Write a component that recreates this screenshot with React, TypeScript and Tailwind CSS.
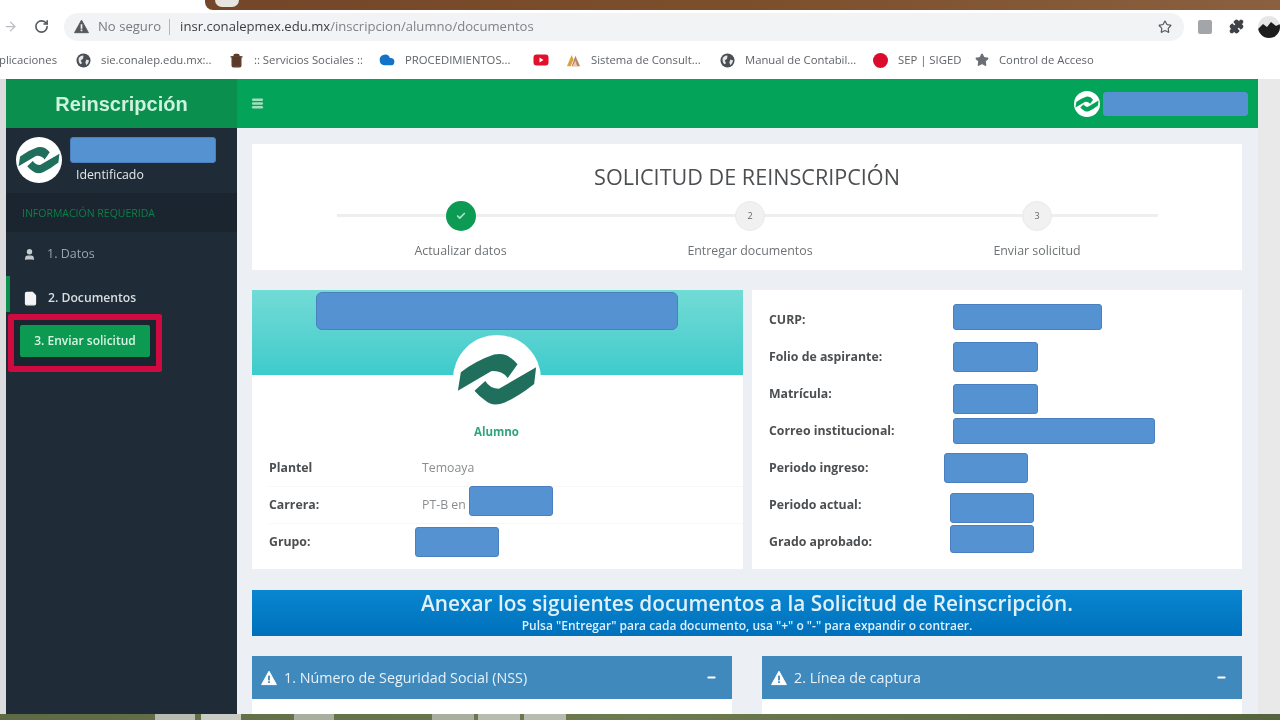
import React from "react";
import { ArrowRight, RotateCw, Star, Puzzle, Cloud, Trash2, User, FileText, Menu, Minus, Check } from "lucide-react";

function Logo({ size, fg = "#1f6f5c" }: { size: number; fg?: string }) {
  return (
    <svg width={size} height={size} viewBox="0 0 90 90" className="shrink-0">
      <circle cx="45" cy="45" r="45" fill="#ffffff" />
      <path d="M5 57 L8 38 Q24 26 42 20 Q56 17 66 30 L56 44 Q50 36 39 37 Z" fill={fg} />
      <path d="M85 33 L83 50 Q68 62 53 69 Q41 74 33 67 Q27 63 22 57 L33 47 Q38 55 47 55 Z" fill={fg} />
    </svg>
  );
}

function Warn({ size, fill, mark }: { size: number; fill: string; mark: string }) {
  return (
    <svg width={size} height={size} viewBox="0 0 16 16" className="shrink-0">
      <path d="M8 1.2 L15.4 14.6 H0.6 Z" fill={fill} stroke={fill} strokeWidth="1" strokeLinejoin="round" />
      <rect x="7.1" y="5.6" width="1.8" height="4.8" fill={mark} />
      <rect x="7.1" y="11.2" width="1.8" height="1.8" fill={mark} />
    </svg>
  );
}

function Earth() {
  return (
    <svg width="15" height="15" viewBox="0 0 16 16" className="shrink-0">
      <circle cx="8" cy="8" r="7.5" fill="#4a4f55" />
      <path d="M3 5 Q6 2 8 3 L7.5 6 L5 8 L6.5 11 L4.5 12 Q2 9 3 5 Z" fill="#e4e6e8" />
      <path d="M11 7 L14 8 Q13.5 11 11 13 L10 10 Z" fill="#e4e6e8" />
    </svg>
  );
}

function Tube() {
  return (
    <svg width="16" height="16" viewBox="0 0 16 16" className="shrink-0">
      <rect x="0.5" y="2.5" width="15" height="11" rx="3" fill="#e3102a" />
      <path d="M6.5 5.5 L10.5 8 L6.5 10.5 Z" fill="#ffffff" />
    </svg>
  );
}

function Sis() {
  return (
    <svg width="15" height="15" viewBox="0 0 16 16" className="shrink-0">
      <path d="M1 14 L6 2 L8 7 L5 14 Z" fill="#d9a23a" />
      <path d="M6 14 L10 3 L15 14 Z" fill="#b9846a" />
      <path d="M7 14 L10 8 L12 14 Z" fill="#e9c9a8" />
    </svg>
  );
}

function Redact({ className }: { className: string }) {
  return <div className={"rounded-[3px] bg-[#5592d2] border border-[#4a80bd] shrink-0 " + className} />;
}

const bookmarks: { w: string; icon: React.ReactNode; label: string }[] = [
  { w: "w-[153px]", icon: <Earth />, label: "sie.conalep.edu.mx:.." },
  { w: "w-[150px]", icon: <Trash2 size={15} className="text-[#5b3a2a] shrink-0" fill="#5b3a2a" />, label: ":: Servicios Sociales ::" },
  { w: "w-[154px]", icon: <Cloud size={16} className="text-[#1273c9] shrink-0" fill="#1273c9" />, label: "PROCEDIMIENTOS..." },
  { w: "w-[33px]", icon: <Tube />, label: "" },
  { w: "w-[154px]", icon: <Sis />, label: "Sistema de Consult..." },
  { w: "w-[153px]", icon: <Earth />, label: "Manual de Contabil..." },
  { w: "w-[102px]", icon: <span className="block size-[15px] rounded-full bg-[#dc0a2c] shrink-0" />, label: "SEP | SIGED" },
  { w: "w-[130px]", icon: <Star size={14} className="text-[#6a6f75] shrink-0" fill="#6a6f75" />, label: "Control de Acceso" },
];

const leftRows = [
  { label: "Plantel", value: "Temoaya", box: null },
  { label: "Carrera:", value: "PT-B en", box: "w-[84px] h-[30px] ml-[3px] -translate-y-[4px]" },
  { label: "Grupo:", value: "", box: "w-[84px] h-[30px] -ml-[7px] -translate-y-[1px]" },
];

const rightRows = [
  { label: "CURP:", box: "w-[149px] h-[26px] -translate-y-[3px]" },
  { label: "Folio de aspirante:", box: "w-[85px] h-[30px]" },
  { label: "Matrícula:", box: "w-[85px] h-[30px] translate-y-[5px]" },
  { label: "Correo institucional:", box: "w-[202px] h-[26px]" },
  { label: "Periodo ingreso:", box: "w-[84px] h-[30px] -ml-[9px]" },
  { label: "Periodo actual:", box: "w-[84px] h-[30px] -ml-[3px] translate-y-[3px]" },
  { label: "Grado aprobado:", box: "w-[84px] h-[28px] -ml-[3px] -translate-y-[3px]" },
];

const steps = [
  { label: "Actualizar datos", mark: <Check size={10} strokeWidth={4} className="text-[#a6e6c6]" />, active: true, w: "w-[291px]" },
  { label: "Entregar documentos", mark: "2", active: false, w: "w-[288px]" },
  { label: "Enviar solicitud", mark: "3", active: false, w: "w-[286px]" },
];

export default function App() {
  return (
    <div className="w-[1280px] h-[720px] overflow-hidden flex flex-col bg-white blur-[0.7px] font-['Open_Sans',sans-serif]">
      {/* window strip */}
      <div className="h-[10px] shrink-0 flex bg-white">
        <div className="w-[205px]" />
        <div className="flex-1 bg-gradient-to-r from-[#74462a] via-[#7c4f2c] to-[#8a6040] rounded-bl-[8px] pl-[10px]">
          <div className="w-[24px] h-[7px] rounded-b-full bg-[#e8e4e0]" />
        </div>
      </div>

      {/* toolbar */}
      <div className="h-[33px] shrink-0 flex items-center bg-white">
        <ArrowRight size={15} className="text-[#b9bcc0] ml-[3px] mr-[16px]" />
        <RotateCw size={15} strokeWidth={2.6} className="text-[#55595e] mr-[15px]" />
        <div className="w-[1120px] h-[28px] rounded-full bg-[#f1f3f4] flex items-center pl-[10px] pr-[12px] text-[13.1px]">
          <Warn size={15} fill="#55585c" mark="#f1f3f4" />
          <span className="text-[#777b80] ml-[9px]">No seguro</span>
          <span className="w-px h-[16px] bg-[#b4b7bb] ml-[8px] mr-[10px]" />
          <span className="text-[#3c4043]">insr.conalepmex.edu.mx</span>
          <span className="text-[#7f8388]">/inscripcion/alumno/documentos</span>
          <Star size={14} className="text-[#54585d] ml-auto" />
        </div>
        <span className="block size-[14px] rounded-[2px] bg-[#a3a6a9] ml-[14px] shrink-0" />
        <Puzzle size={15} className="text-[#3f4347] ml-[17px] shrink-0" fill="#3f4347" />
        <svg width="22" height="22" viewBox="0 0 22 22" className="ml-[14px] shrink-0">
          <clipPath id="av"><circle cx="11" cy="11" r="11" /></clipPath>
          <g clipPath="url(#av)">
            <rect width="22" height="22" fill="#e6e6e6" />
            <path d="M0 13 L5 8 L9 11 L13 6 L18 10 L22 8 V22 H0 Z" fill="#1d1d1d" />
          </g>
        </svg>
      </div>

      {/* bookmarks */}
      <div className="h-[36px] shrink-0 flex items-center pb-[2px] text-[11.3px] text-[#5f6368] overflow-hidden whitespace-nowrap">
        <span className="w-[77px] shrink-0 -ml-[1px] overflow-hidden">
          <span className="block">plicaciones</span>
        </span>
        {bookmarks.map((b, i) => (
          <div key={i} className={"flex items-center gap-[10px] shrink-0 " + b.w}>
            {b.icon}
            {b.label && <span>{b.label}</span>}
          </div>
        ))}
      </div>

      {/* page */}
      <div className="flex-1 min-h-0 flex bg-[#e6e6e6]">
        <div className="w-[6px] shrink-0 bg-[#dcdcdc]" />

        {/* sidebar */}
        <aside className="w-[231px] shrink-0 flex flex-col bg-[#1f2b36]">
          <div className="h-[49px] shrink-0 bg-[#0a8f4e] flex items-center justify-center pt-[1px] text-[#cdf2dd] text-[20px] font-bold font-['Liberation_Sans',sans-serif]">
            Reinscripción
          </div>
          <div className="h-[65px] shrink-0 flex pl-[10px] pt-[9px] gap-[8px]">
            <Logo size={46} />
            <div>
              <Redact className="w-[146px] h-[26px]" />
              <div className="text-[12.3px] text-[#e4e8ea] ml-[6px] mt-[3px]">Identificado</div>
            </div>
          </div>
          <div className="h-[39px] shrink-0 bg-[#1a252f] flex items-center pl-[16px] pt-[3px] text-[10.5px] text-[#0d7f48] whitespace-nowrap">
            INFORMACIÓN REQUERIDA
          </div>
          <div className="h-[44px] shrink-0 flex items-center pl-[17px] gap-[11px] text-[12.5px] text-[#9aa3ab]">
            <User size={13} fill="#c6ccd1" className="text-[#c6ccd1]" />
            <span>1. Datos</span>
          </div>
          <div className="h-[36px] shrink-0 flex items-center pl-[13px] pt-[8px] gap-[10px] text-[12.2px] font-semibold text-[#d9dee2] border-l-[4px] border-[#0a8f4e]">
            <FileText size={15} fill="#f2f4f5" className="text-[#f2f4f5]" />
            <span>2. Documentos</span>
          </div>
          <div className="w-[154px] h-[58px] ml-[2px] mt-[2px] pb-[4px] border-[6px] border-[#cf0a41] rounded-[2px] flex items-center justify-center bg-[#1a252f]">
            <div className="w-[130px] h-[32px] bg-[#0c9a52] rounded-[2px] flex items-center justify-center text-[12px] font-semibold text-[#d8f5e4] whitespace-nowrap">
              3. Enviar solicitud
            </div>
          </div>
        </aside>

        {/* main */}
        <div className="w-[1021px] shrink-0 flex flex-col bg-[#ecf0f5]">
          <header className="h-[49px] shrink-0 bg-[#03a459] flex items-center pl-[14px] pr-[10px]">
            <Menu size={13} strokeWidth={4.5} className="text-[#a0e0bc]" />
            <div className="ml-auto flex items-center gap-[3px]">
              <Logo size={26} fg="#03a459" />
              <Redact className="w-[145px] h-[24px] border-[#5592d2]" />
            </div>
          </header>

          <main className="flex-1 min-h-0 overflow-hidden pl-[15px] pr-[16px] pt-[16px] flex flex-col">
            {/* stepper */}
            <section className="h-[126px] shrink-0 bg-white flex flex-col items-center">
              <h1 className="text-[21.6px] leading-none text-[#4c4f52] mt-[22px] whitespace-nowrap">SOLICITUD DE REINSCRIPCIÓN</h1>
              <div className="relative w-[821px] mt-[13px] ml-[1px]">
                <div className="absolute left-0 right-0 top-[13px] h-[3px] bg-[#eeeeee]" />
                <div className="relative flex">
                  {steps.map((s) => (
                    <div key={s.label} className={"flex flex-col items-center shrink-0 first:-ml-[22px] " + s.w}>
                      <div
                        className={
                          s.active
                            ? "size-[30px] rounded-full bg-[#0d9b54] flex items-center justify-center"
                            : "size-[30px] rounded-full bg-[#f1f1f1] border border-[#eaeaea] flex items-center justify-center text-[9px] text-[#666666]"
                        }
                      >
                        {s.mark}
                      </div>
                      <div className="text-[12.4px] leading-none text-[#6f7275] mt-[14px] whitespace-nowrap">{s.label}</div>
                    </div>
                  ))}
                </div>
              </div>
            </section>

            {/* cards */}
            <div className="h-[279px] shrink-0 mt-[20px] flex gap-[9px]">
              <section className="w-[491px] bg-white flex flex-col">
                <div className="h-[85px] shrink-0 bg-gradient-to-b from-[#72dbd5] to-[#3ccbcc] pt-[2px] flex justify-center">
                  <Redact className="w-[362px] h-[38px] rounded-[6px] -ml-[2px]" />
                </div>
                <div className="relative h-[54px] shrink-0">
                  <div className="absolute left-[201px] -top-[40px]">
                    <Logo size={88} />
                  </div>
                </div>
                <div className="text-center text-[11.5px] font-bold text-[#2fa57d] leading-[16px] mt-[-5px] pr-[2px]">Alumno</div>
                <div className="mt-[10px] pl-[17px] flex flex-col">
                  {leftRows.map((r) => (
                    <div key={r.label} className="h-[37px] flex items-center border-b border-[#f7f7f7] last:border-0">
                      <div className="w-[153px] shrink-0 text-[12.3px] font-bold text-[#4c4f52]">{r.label}</div>
                      {r.value && <span className="text-[12.3px] text-[#8a8d90] whitespace-nowrap">{r.value}</span>}
                      {r.box && <Redact className={r.box} />}
                    </div>
                  ))}
                </div>
              </section>

              <section className="w-[490px] bg-white pt-[11px] pl-[17px]">
                {rightRows.map((r) => (
                  <div key={r.label} className="h-[37px] flex items-center">
                    <div className="w-[184px] shrink-0 translate-y-[1px] text-[12.3px] font-bold text-[#4c4f52] whitespace-nowrap">{r.label}</div>
                    <Redact className={r.box} />
                  </div>
                ))}
              </section>
            </div>

            {/* banner */}
            <section className="h-[46px] shrink-0 mt-[21px] bg-gradient-to-b from-[#0a86d0] to-[#0070bb] flex flex-col items-center text-[#dff0fb]">
              <div className="text-[20.8px] leading-[24px] font-semibold mt-[1px] whitespace-nowrap">Anexar los siguientes documentos a la Solicitud de Reinscripción.</div>
              <div className="text-[12px] leading-[14px] font-semibold mt-[4px] whitespace-nowrap">Pulsa "Entregar" para cada documento, usa "+" o "-" para expandir o contraer.</div>
            </section>

            {/* panels */}
            <div className="flex-1 mt-[20px] flex gap-[30px]">
              {["1. Número de Seguridad Social (NSS)", "2. Línea de captura"].map((t) => (
                <section key={t} className="w-[480px] bg-white">
                  <div className="h-[43px] bg-[#4089bd] flex items-center pl-[9px] pr-[15px] gap-[7px] text-[14.3px] text-[#e6f1f8]">
                    <Warn size={16} fill="#ffffff" mark="#4089bd" />
                    <span>{t}</span>
                    <Minus size={11} strokeWidth={4} className="text-white ml-auto" />
                  </div>
                </section>
              ))}
            </div>
          </main>
        </div>

        <div className="flex-1 bg-[#e9e9e9]" />
      </div>

      {/* desktop strip */}
      <div className="h-[6px] shrink-0 flex bg-gradient-to-r from-[#5d6a45] via-[#6e7a50] to-[#55633f]">
        <div className="w-[155px]" />
        <div className="w-[40px] bg-[#b8bcb0]" />
        <div className="w-[6px]" />
        <div className="w-[40px] bg-[#c9ccc2]" />
        <div className="w-[53px]" />
        <div className="w-[40px] bg-[#a9ae9e]" />
        <div className="w-[98px]" />
        <div className="w-[42px] bg-[#a9ae9e]" />
        <div className="w-[4px]" />
        <div className="w-[42px] bg-[#b8bcb0]" />
        <div className="w-[4px]" />
        <div className="w-[42px] bg-[#b8bcb0]" />
      </div>
    </div>
  );
}
